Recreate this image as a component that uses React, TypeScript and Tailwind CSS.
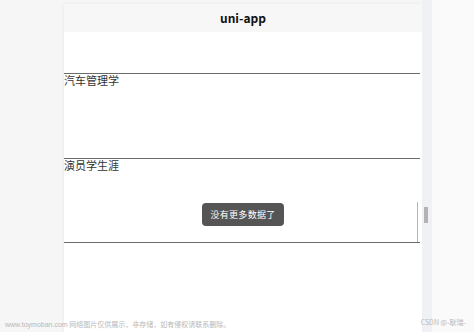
import React from 'react';

const ITEMS = [
  { id: 1, title: '', h: 'h-[42px]' },
  { id: 2, title: '汽车管理学', h: 'h-[85px]' },
  { id: 3, title: '演员学生涯', h: 'h-[84px]' },
];

const FONT = 'font-["Noto_Sans_CJK_SC","Noto_Sans",sans-serif]';

const App: React.FC = () => {
  return (
    <div className={`relative w-[474px] h-[332px] overflow-hidden bg-[#f6f6f6] flex ${FONT}`}>
      <div className="w-[64px] shrink-0" />

      {/* phone page */}
      <div className="w-[358px] shrink-0 mt-[4px] bg-white flex flex-col shadow-[0_0_4px_rgba(0,0,0,0.06)]">
        <div className="h-[28px] bg-[#f7f7f7] flex items-center justify-center">
          <span className="text-[12px] font-bold text-[#111]">uni-app</span>
        </div>

        {ITEMS.map(item => (
          <div key={item.id} className={`relative ${item.h} border-b border-[#6b6b6b] mr-[2px]`}>
            {item.title && (
              <p className="text-[11px] leading-[13px] text-[#333]">{item.title}</p>
            )}
            {item.id === 3 && (
              <div className="absolute right-[2px] top-[43px] bottom-0 w-px bg-[#b5b5b5]" />
            )}
          </div>
        ))}

        <div className="flex-1" />
      </div>

      {/* scroll track */}
      <div className="relative w-[10px] shrink-0 bg-[#f0f1f4]">
        <div className="absolute left-[2px] top-[207px] w-[4px] h-[16px] bg-[#b3b3b3]" />
      </div>

      <div className="flex-1 bg-[#fafafa]" />

      {/* toast */}
      <div className="absolute left-[202px] top-[203px] w-[82px] h-[23px] rounded-[4px] bg-[#555] flex items-center justify-center">
        <span className="text-[9px] text-white tracking-[0.3px]">没有更多数据了</span>
      </div>

      {/* watermarks */}
      <div className="absolute left-[5px] bottom-[2px] text-[7px] leading-[10px] text-[#b8b8b8] whitespace-nowrap">
        <span className='font-["Liberation_Sans",sans-serif]'>www.toymoban.com</span> 网络图片仅供展示，非存储，如有侵权请联系删除。
      </div>
      <div className="absolute right-[8px] bottom-[5px] text-[7px] leading-[10px] text-[#b8b8b8] whitespace-nowrap">
        CSDN @-耿瑞-
      </div>
    </div>
  );
};

export default App;
